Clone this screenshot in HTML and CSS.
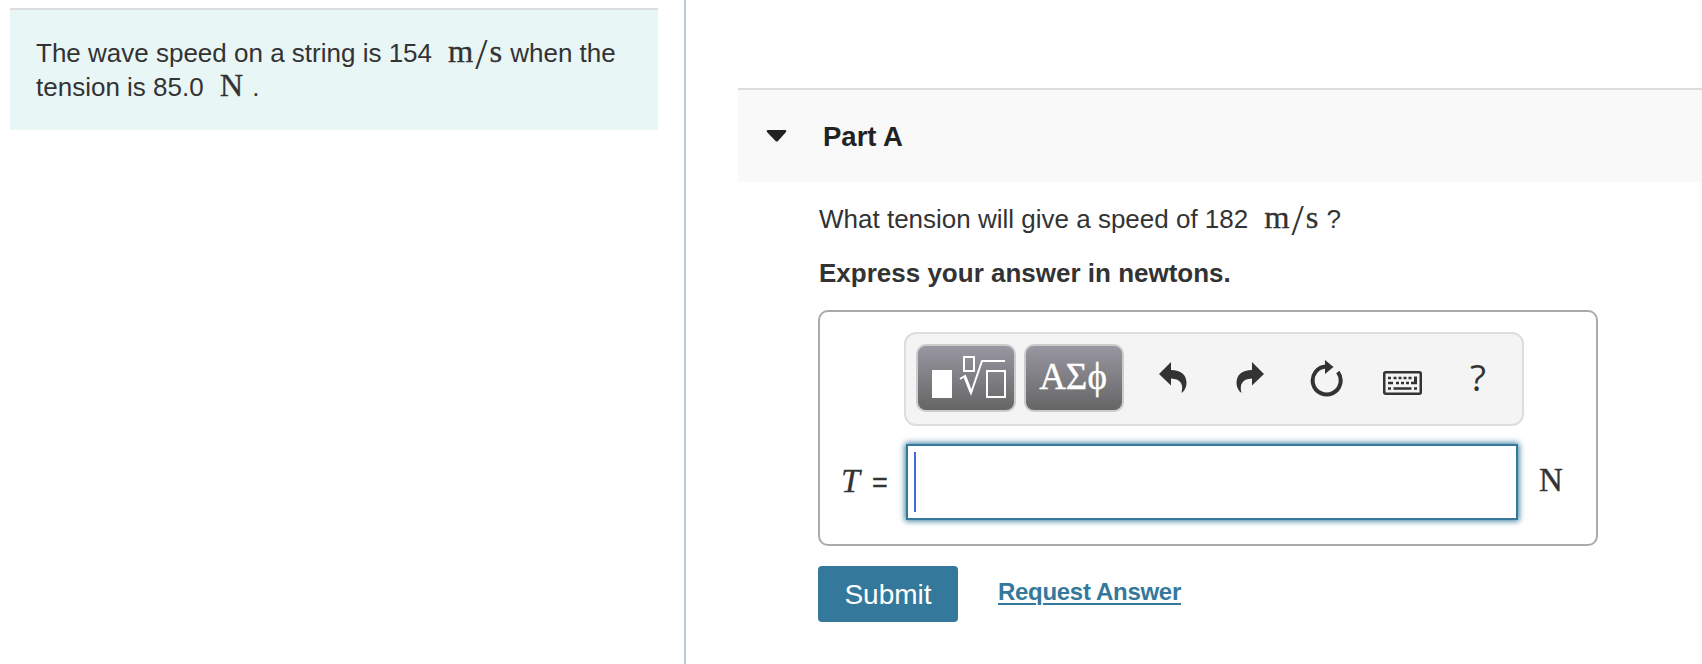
FILE: index.html
```html
<!DOCTYPE html>
<html lang="en">
<head>
    <meta charset="UTF-8">
    <meta name="viewport" content="width=device-width, initial-scale=1.0">
    <title>Part A</title>
    <link rel="stylesheet" href="styles.css">
</head>
<body>
    <div class="page">
        <aside class="sidebar">
            <div class="intro">
                <span>The wave speed on a string is 154</span><span class="unit">m<span class="slash">/</span>s</span><span class="intro-b">when the</span><br>
                <span>tension is 85.0</span><span class="unit">N</span><span class="dot">.</span>
            </div>
        </aside>
        <main class="content">
            <div class="part-header">
                <svg class="arrow" width="22" height="12" viewBox="0 0 22 12"><path d="M1.5 0h18q1.500 0.500 0.500 2L12 11q-1.250 1-2.500 0L1 2Q0 0.500 1.500 0z" fill="#222"/></svg>
                <h2>Part A</h2>
            </div>
            <div class="part-body">
                <p class="question"><span>What tension will give a speed of 182</span><span class="unit">m<span class="slash">/</span>s</span><span class="mark">?</span></p>
                <p class="instructions">Express your answer in newtons.</p>
                <div class="answer-box">
                    <div class="toolbar">
                        <button class="tool-btn">
                            <svg width="96" height="64" viewBox="0 0 96 64" fill="none" stroke="#fff" stroke-width="2">
                                <path d="M14 24h20v28H14z" fill="#fff" stroke="none"/>
                                <path d="M46 11h10v14H46zM69 25h18v26H69z"/>
                                <path d="M42 33l5-3 6 17L64 15h23"/>
                                <path d="M47 31l6 15" stroke-width="3"/>
                            </svg>
                        </button>
                        <button class="tool-btn greek">ΑΣϕ</button>
                        <svg class="icon undo" width="28" height="32" viewBox="0 0 28 32"><path d="M0 12L12 0v8c10 0 15.500 5 15.500 13 0 4-2 8-5 10 2-8 0-14-10.500-14.500V23.500z" fill="#333"/></svg>
                        <svg class="icon redo" width="28" height="32" viewBox="0 0 28 32"><path d="M28 12L16 0v8C6 8 .500 13 .500 21c0 4 2 8 5 10-2-8 0-14 10.500-14.500V23.500z" fill="#333"/></svg>
                        <svg class="icon reset" width="34" height="38" viewBox="0 0 34 38"><path d="M16 6.500A14 14 0 1 0 27.800 12" fill="none" stroke="#333" stroke-width="4"/><path d="M15 0l8.500 7-8.500 7z" fill="#333"/></svg>
                        <svg class="icon keyboard" width="40" height="24" viewBox="0 0 40 24" fill="none" stroke="#333">
                            <rect x="1.250" y="1.250" width="36.500" height="21.500" rx="1.500" stroke-width="2.500"/>
                            <path d="M5 7h3M10.500 7h3M15.500 7h3M20.500 7h3M25.500 7h3M5 12h5M13 12h3M18 12h3M23 12h3M28 12h6M5 17.500h3M10.500 17.500h18M31 17.500h3" stroke-width="2.400"/>
                            <path d="M32.500 5.500v7" stroke-width="3"/>
                        </svg>
                        <span class="help">?</span>
                    </div>
                    <div class="input-row">
                        <span class="variable"><i>T</i><span class="equals">=</span></span>
                        <div class="answer-input"><span class="caret"></span></div>
                        <span class="answer-unit">N</span>
                    </div>
                </div>
                <div class="actions">
                    <button class="submit">Submit</button>
                    <a class="request" href="#">Request Answer</a>
                </div>
            </div>
        </main>
    </div>
</body>
</html>
```

FILE: styles.css
```css
* {
    box-sizing: border-box;
}
body {
    margin: 0;
    background-color: #fff;
    color: #333;
    font-family: "Liberation Sans", Arial, sans-serif;
    font-size: 26px;
    overflow: hidden;
}
.page {
    display: flex;
    height: 664px;
}
.sidebar {
    width: 686px;
    padding: 8px 26px 0 10px;
    border-right: 2px solid #bccbdb;
}
.intro {
    height: 122px;
    padding: 26px;
    border-top: 2px solid #ddd;
    background-color: #e8f6f6;
    line-height: 34px;
    white-space: nowrap;
}
.unit {
    margin-left: 16px;
    font-family: "Liberation Serif", serif;
    font-size: 32.5px;
    line-height: 0;
    -webkit-text-stroke: 0.3px #333;
}
.slash {
    margin: 0 2px;
    font-size: 44px;
    vertical-align: -7px;
    -webkit-text-stroke: 0;
}
.intro-b {
    margin-left: 8px;
}
.dot {
    margin-left: 9px;
}
.content {
    flex: 1;
    padding: 88px 0 0 52px;
}
.part-header {
    display: flex;
    align-items: center;
    height: 94px;
    padding-left: 28px;
    border-top: 2px solid #ddd;
    background-color: #f9f9f9;
}
.part-header h2 {
    margin: 1px 0 0 35px;
    color: #222;
    font-size: 27.5px;
}
.part-body {
    padding-left: 80px;
}
.question {
    height: 34px;
    margin: 20px 0 0;
    padding-left: 1px;
    line-height: 34px;
}
.mark {
    margin-left: 8px;
}
.instructions {
    margin: 20px 0 0;
    padding-left: 1px;
    font-weight: bold;
    line-height: 34px;
}
.answer-box {
    width: 780px;
    height: 236px;
    margin-top: 20px;
    padding: 20px 0 0 84px;
    border: 2px solid #aaa;
    border-radius: 10px;
}
.toolbar {
    display: flex;
    width: 620px;
    height: 94px;
    padding: 10px;
    border: 2px solid #ddd;
    border-radius: 12px;
    background-color: #f4f4f4;
}
.tool-btn {
    width: 100px;
    height: 68px;
    margin-right: 8px;
    padding: 0;
    border: 2px solid #ccc;
    border-radius: 10px;
    background: linear-gradient(#9a98a3, #646464) border-box;
    color: #fff;
}
.tool-btn svg {
    display: block;
}
.greek {
    padding: 0 2px 3px 0;
    font-family: "Liberation Serif", serif;
    font-size: 37px;
    line-height: 60px;
    -webkit-text-stroke: 0.4px #fff;
}
.icon {
    flex: none;
}
.undo {
    margin: 18px 0 0 27px;
}
.redo {
    margin: 18px 0 0 49px;
}
.reset {
    margin: 16px 0 0 46px;
}
.keyboard {
    margin: 27px 0 0 39px;
}
.help {
    margin: 12px 0 0 47px;
    font-family: "Open Sans", sans-serif;
    font-size: 37px;
    line-height: 42px;
}
.input-row {
    display: flex;
    height: 76px;
    margin: 18px 0 0 -84px;
}
.variable {
    width: 86px;
    padding-left: 21px;
    font-family: "Liberation Serif", serif;
    font-size: 34px;
    line-height: 74px;
    white-space: nowrap;
    -webkit-text-stroke: 0.3px #333;
}
.equals {
    margin-left: 12px;
    font-family: "Liberation Sans", Arial, sans-serif;
    font-size: 27px;
}
.answer-input {
    width: 612px;
    height: 76px;
    padding: 6px;
    border: 2px solid #34799b;
    box-shadow: 0 0 6px 1px #34799b;
}
.caret {
    display: block;
    width: 2px;
    height: 60px;
    background-color: #4169d8;
}
.answer-unit {
    margin-left: 21px;
    font-family: "Liberation Serif", serif;
    font-size: 33px;
    line-height: 72px;
    -webkit-text-stroke: 0.4px #333;
}
.actions {
    display: flex;
    margin-top: 20px;
}
.submit {
    width: 140px;
    height: 56px;
    padding: 2px 0 0;
    border: none;
    border-radius: 4px;
    background-color: #34799b;
    color: #fff;
    font-family: inherit;
    font-size: 28px;
}
.request {
    margin-left: 40px;
    color: #34799b;
    font-size: 24px;
    font-weight: bold;
    letter-spacing: -0.3px;
    line-height: 52px;
    text-decoration-thickness: 2px;
    text-underline-offset: 3px;
}
```
